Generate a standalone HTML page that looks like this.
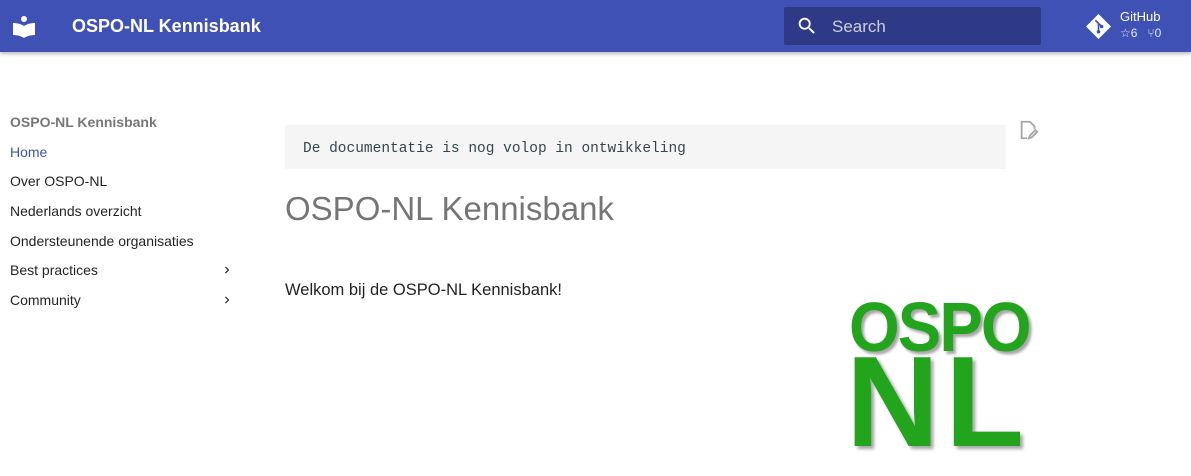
<!DOCTYPE html>
<html><head><meta charset="utf-8"><style>
*{margin:0;padding:0;box-sizing:border-box}
body{width:1191px;height:474px;overflow:hidden;background:#fff;font-family:"Liberation Sans",Roboto,sans-serif;color:rgba(0,0,0,.87);position:relative}
.hdr{position:absolute;left:0;top:0;width:1191px;height:52px;background:#4051b5;box-shadow:0 0 4px rgba(0,0,0,.2),0 2px 4px rgba(0,0,0,.2)}
.title{position:absolute;left:72px;top:16px;color:#fff;font-weight:bold;font-size:18px}
.search{position:absolute;left:784px;top:7px;width:257px;height:38px;background:#2e3a86;border-radius:2px}
.search span{position:absolute;left:48px;top:10px;color:rgba(255,255,255,.75);font-size:17px}
.gh{position:absolute;left:1120px;top:9px;color:#fff;font-size:13px}
.gh .s{font-size:12px;margin-top:2px;color:rgba(255,255,255,.85)}
.nav{position:absolute;left:10px;top:112px;font-size:14px}
.nav div{height:29.7px;line-height:20px;color:rgba(0,0,0,.87);position:relative;width:224px}
.nav .h{font-weight:bold;color:rgba(0,0,0,.54);font-size:14px}
.nav .a{color:#4051b5}
.nav svg{position:absolute;right:0;top:3px}
.code{position:absolute;left:285px;top:125px;width:721px;height:44px;background:#f5f5f5;font-family:"Liberation Mono",monospace;font-size:14.5px;padding:16px 18px;color:#36464e}
h1{position:absolute;left:285px;top:190px;font-weight:300;font-size:33px;color:rgba(0,0,0,.54)}
.p{position:absolute;left:285px;top:281px;font-size:16.5px}
.lo{position:absolute;font-family:"Liberation Sans",Arial,sans-serif;font-weight:bold;color:#22a41c;text-shadow:3px 3px 3px rgba(0,0,0,.35);transform-origin:0 0}
</style></head><body>
<div class="hdr">
<svg style="position:absolute;left:12px;top:14px" width="24" height="24" viewBox="0 0 24 24" fill="#fff"><circle cx="12" cy="5" r="3"/><path d="M1 9c4 0 8 1 11 3 3-2 7-3 11-3v12c-4 0-8 1-11 3-3-2-7-3-11-3z"/></svg>
<div class="title">OSPO-NL Kennisbank</div>
<div class="search"><svg style="position:absolute;left:12px;top:8px" width="22" height="22" viewBox="0 0 24 24" fill="#fff"><path d="M9.5 3A6.5 6.5 0 0 1 16 9.5c0 1.6-.6 3.1-1.6 4.3l.3.2h.8l5 5-1.5 1.5-5-5v-.8l-.3-.3A6.5 6.5 0 1 1 9.5 3m0 2C7 5 5 7 5 9.5S7 14 9.5 14 14 12 14 9.5 12 5 9.5 5z"/></svg><span>Search</span></div>
<svg style="position:absolute;left:1086px;top:14px" width="25" height="25" viewBox="0 0 24 24"><path fill="#fff" d="M12 0l12 12-12 12L0 12z"/><path d="M9 6l3 3v8M12 9l3 3" stroke="#4051b5" stroke-width="1.6" fill="none"/><circle cx="12" cy="17" r="1.7" fill="#4051b5"/><circle cx="15" cy="12" r="1.7" fill="#4051b5"/></svg>
<div class="gh">GitHub<div class="s">☆6 &nbsp; ⑂0</div></div>
</div>
<div class="nav">
<div class="h">OSPO-NL Kennisbank</div>
<div class="a">Home</div>
<div>Over OSPO-NL</div>
<div>Nederlands overzicht</div>
<div>Ondersteunende organisaties</div>
<div>Best practices<svg width="14" height="14" viewBox="0 0 24 24"><path d="M8.6 16.6 13.2 12 8.6 7.4 10 6l6 6-6 6z" fill="#222"/></svg></div>
<div>Community<svg width="14" height="14" viewBox="0 0 24 24"><path d="M8.6 16.6 13.2 12 8.6 7.4 10 6l6 6-6 6z" fill="#222"/></svg></div>
</div>
<svg style="position:absolute;left:1018px;top:119px" width="22" height="22" viewBox="0 0 24 24" fill="none" stroke="rgba(0,0,0,.35)" stroke-width="2"><path d="M10 21H4V3h9l5 5v3"/><path d="M12 21l1-3 6-6 2 2-6 6z"/></svg>
<div class="code">De documentatie is nog volop in ontwikkeling</div>
<h1>OSPO-NL Kennisbank</h1>
<div class="p">Welkom bij de OSPO-NL Kennisbank!</div>
<div class="lo" style="left:849px;top:287px;font-size:70px;letter-spacing:-2px;transform:scaleX(.93)">OSPO</div>
<div class="lo" style="left:846px;top:328px;font-size:129px;letter-spacing:6px">NL</div>
</body></html>
